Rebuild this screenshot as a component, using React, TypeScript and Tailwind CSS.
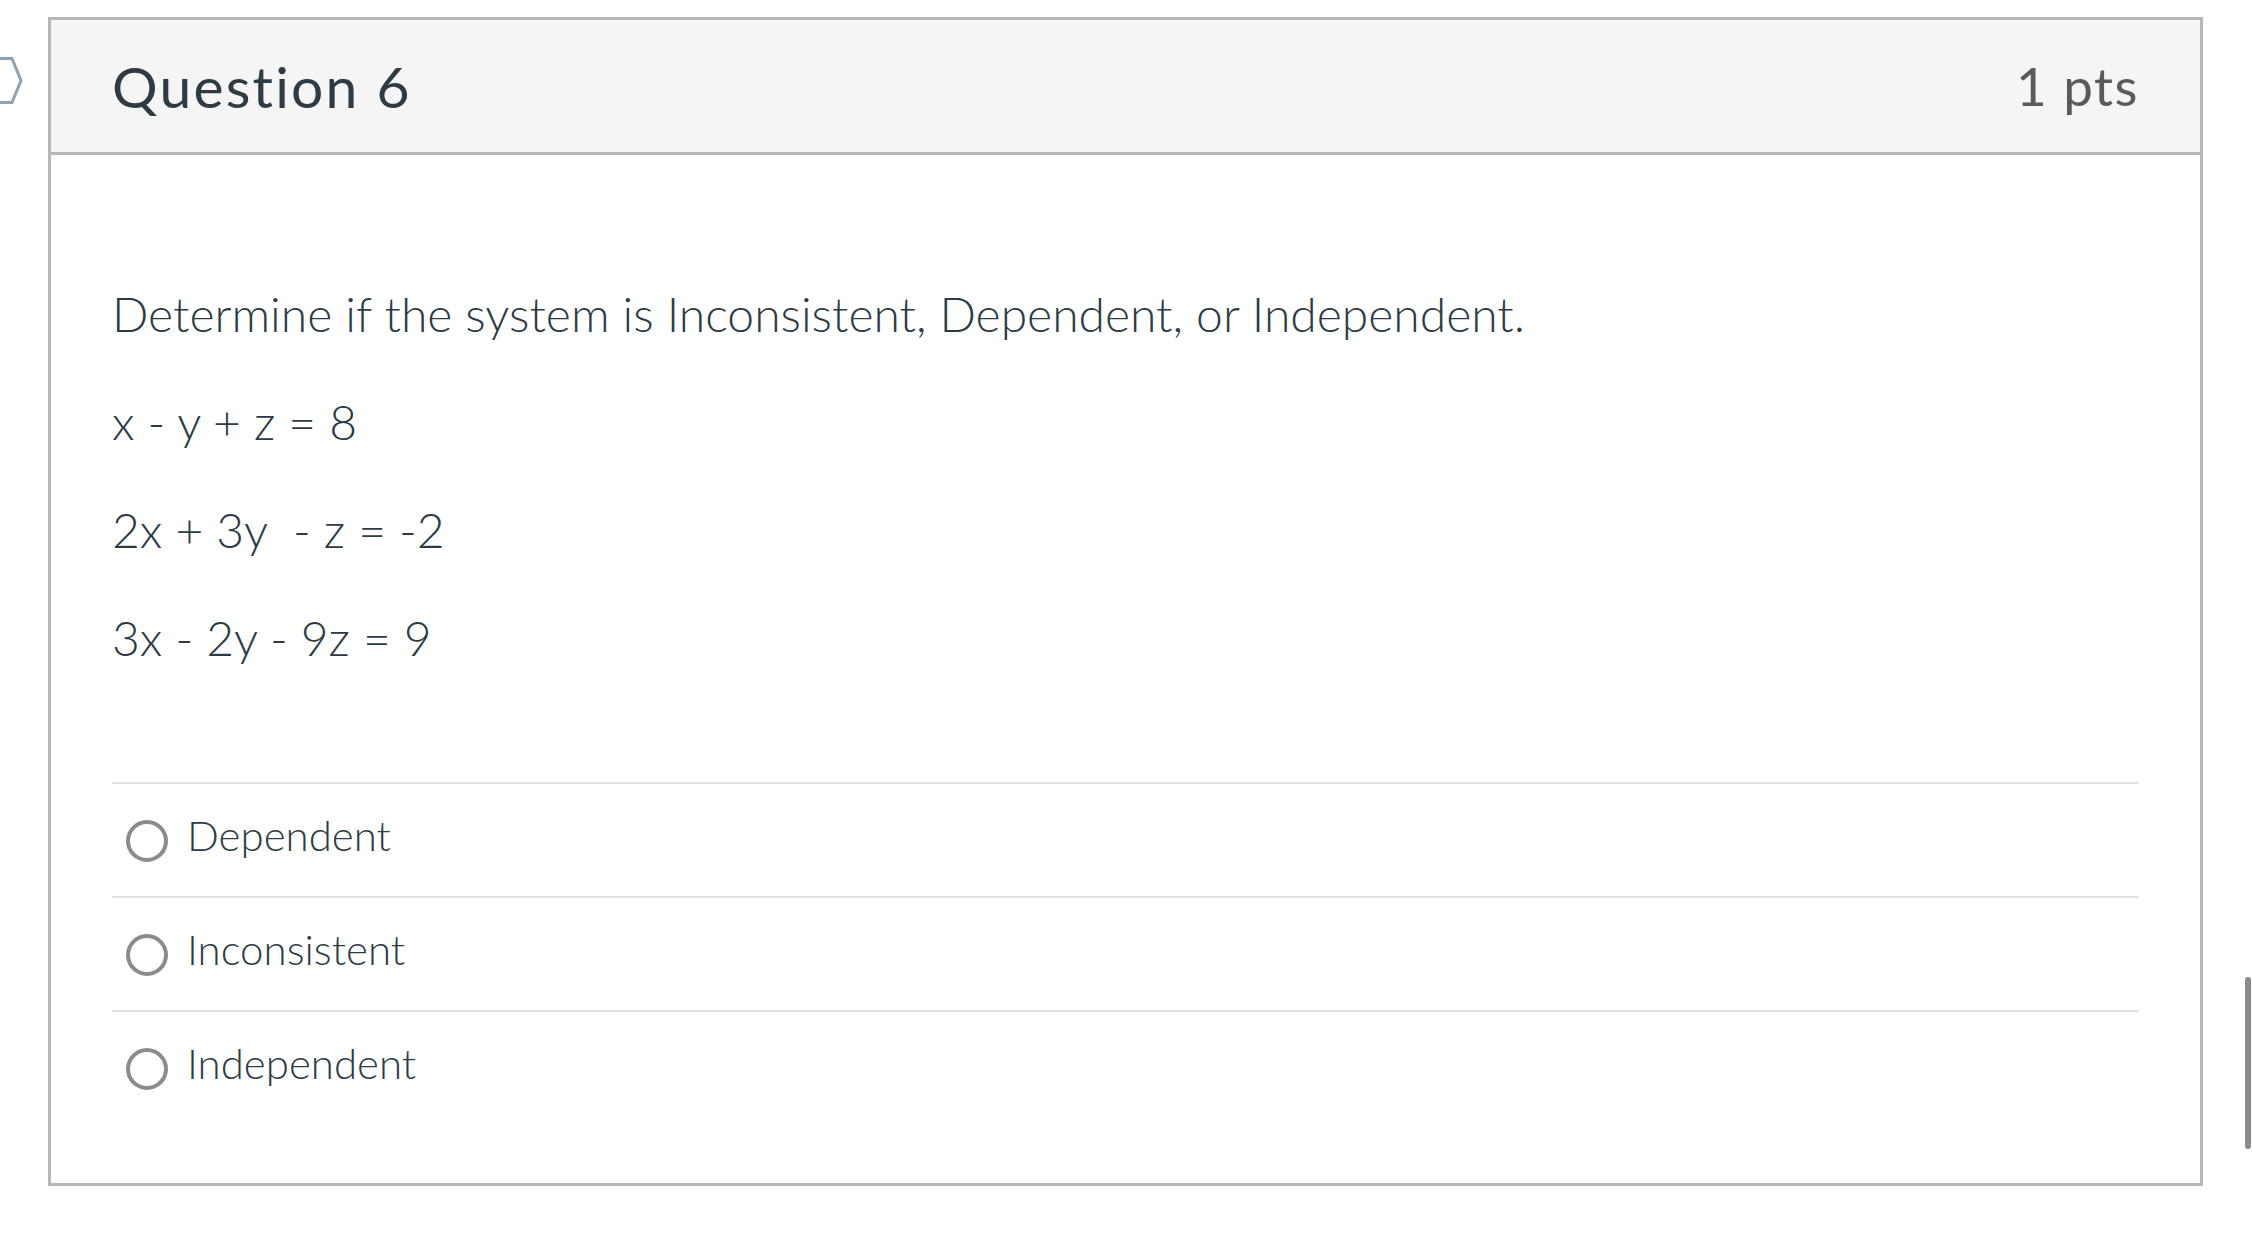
import React from "react";

const options = ["Dependent", "Inconsistent", "Independent"];

export default function App() {
  return (
    <div className="relative w-[2252px] h-[1250px] bg-white overflow-hidden font-[Lato,sans-serif]">
      <div className="flex pt-[17px]">
        <div className="w-[48px] shrink-0">
          <svg className="mt-[40px]" width="24" height="48" viewBox="0 0 24 48" fill="none">
            <polyline
              points="-2,1.5 12,1.5 21,23.5 12,45.5 -2,45.5"
              stroke="#8ea3b3"
              strokeWidth="3"
              strokeLinejoin="miter"
              fill="none"
            />
          </svg>
        </div>
        <div className="w-[2155px] shrink-0 border-[3px] border-[#b7b7b7] bg-white">
          <div className="h-[135px] flex items-center justify-between px-[61px] bg-[#f5f5f5] border-b-[3px] border-[#b7b7b7]">
            <span className="text-[57px] leading-[1.2] tracking-[2.2px] text-[#2d3b45]">Question 6</span>
            <span className="text-[53px] leading-[1.2] tracking-[1.5px] text-[#5a5a5a]">1 pts</span>
          </div>
          <div className="px-[61px] pt-[124px] pb-[59px]">
            <div className="text-[48px] leading-[69px] font-['Lato_Light',Lato,sans-serif] font-light text-[#2d3b45]">
              <p className="mb-[39px]">Determine if the system is Inconsistent, Dependent, or Independent.</p>
              <p className="mb-[39px]">x - y + z = 8</p>
              <p className="mb-[39px]">2x + 3y&nbsp; - z = -2</p>
              <p>3x - 2y - 9z = 9</p>
            </div>
            <div className="mt-[110px]">
              {options.map((o) => (
                <div key={o} className="flex items-start border-t-[2px] border-[#e2e2e2] pt-[27px] pb-[34px]">
                  <span className="ml-[14px] mt-[9px] w-[42px] h-[42px] rounded-full border-[4px] border-[#8b8b8b] shrink-0" />
                  <span className="ml-[19px] text-[42px] leading-[48px] font-['Lato_Light',Lato,sans-serif] font-light text-[#2d3b45]">{o}</span>
                </div>
              ))}
            </div>
          </div>
        </div>
      </div>
      <div className="absolute left-[2245px] top-[977px] w-[6px] h-[172px] rounded-full bg-[#8a8a8a]" />
    </div>
  );
}
